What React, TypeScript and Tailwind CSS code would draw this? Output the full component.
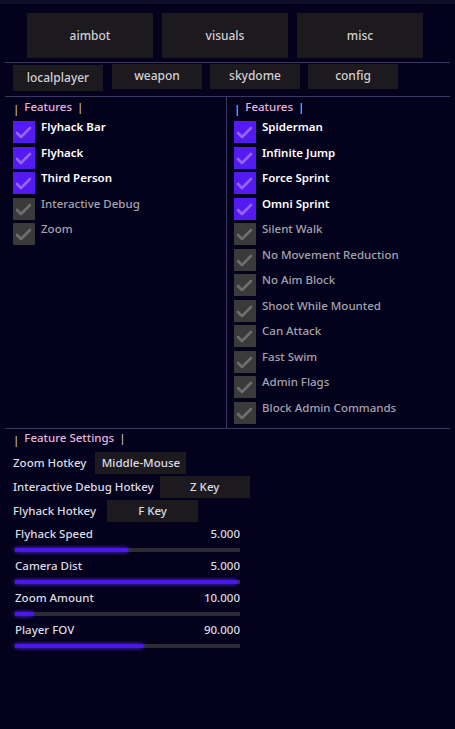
import React from "react";

const FONT = "font-['Noto_Sans','Open_Sans',sans-serif]";

function Check({ on }: { on: boolean }) {
  return (
    <div
      className={`w-[22px] h-[22px] shrink-0 flex items-center justify-center ${
        on ? "bg-[#5519f2]" : "bg-[#3a3a3b]"
      }`}
    >
      <svg width="22" height="22" viewBox="0 0 22 22">
        <path
          d="M4 12 L8 16 L17 7"
          fill="none"
          stroke={on ? "#9566ec" : "#6e6e6a"}
          strokeWidth="2.6"
          strokeLinecap="round"
          strokeLinejoin="round"
        />
      </svg>
    </div>
  );
}

function Item({ label, on }: { label: string; on: boolean }) {
  return (
    <div className="flex items-start h-[22px]">
      <Check on={on} />
      <span
        className={`ml-[6px] text-[11.5px] leading-[14px] mt-[-1px] whitespace-nowrap ${
          on ? "text-white font-semibold" : "text-[#a3a3ad] font-medium"
        }`}
      >
        {label}
      </span>
    </div>
  );
}

function Header({ title }: { title: string }) {
  return (
    <div className="flex items-center h-[16px] text-[11.5px] leading-[16px]">
      <span className="text-[#dadae0] translate-y-[2px]">|</span>
      <span className="ml-[5px] text-[#e6b3df] font-medium">{title}</span>
      <span className="ml-[5px] text-[#dadae0]">|</span>
    </div>
  );
}

function Slider({ label, value, pct }: { label: string; value: string; pct: number }) {
  return (
    <div className="ml-[15px] w-[225px] mt-[6px] first:mt-0">
      <div className="flex justify-between h-[16px] text-[11.5px] leading-[16px] text-[#dcdce2] font-medium">
        <span>{label}</span>
        <span>{value}</span>
      </div>
      <div className="mt-[6px] h-[4px] bg-[#2d2d31] relative">
        <div
          className="h-full bg-[#4a16f4] shadow-[0_0_4px_#5b2cff]"
          style={{ width: `${pct}%` }}
        />
      </div>
    </div>
  );
}

export default function App() {
  const left: [string, boolean][] = [
    ["Flyhack Bar", true],
    ["Flyhack", true],
    ["Third Person", true],
    ["Interactive Debug", false],
    ["Zoom", false],
  ];
  const right: [string, boolean][] = [
    ["Spiderman", true],
    ["Infinite Jump", true],
    ["Force Sprint", true],
    ["Omni Sprint", true],
    ["Silent Walk", false],
    ["No Movement Reduction", false],
    ["No Aim Block", false],
    ["Shoot While Mounted", false],
    ["Can Attack", false],
    ["Fast Swim", false],
    ["Admin Flags", false],
    ["Block Admin Commands", false],
  ];
  return (
    <div className={`w-[455px] h-[729px] bg-[#04011c] border-t-4 border-[#110e27] overflow-hidden ${FONT}`}>
      <div className="flex gap-[9px] pl-[27px] pt-[9px]">
        {["aimbot", "visuals", "misc"].map((t) => (
          <div
            key={t}
            className="w-[126px] h-[45px] bg-[#1c1a1f] flex items-center justify-center text-[12px] text-[#d0d0d4] font-medium"
          >
            {t}
          </div>
        ))}
      </div>
      <div className="mx-[5px] mt-[4px] h-px bg-[#3a3763]" />
      <div className="flex items-start pl-[13px] mt-px h-[27px]">
        <div className="w-[90px] h-[26px] mt-px bg-[#1c1a1f] flex items-center justify-center text-[12px] text-[#d0d0d4] font-medium">
          localplayer
        </div>
        <div className="w-[90px] h-[25px] ml-[9px] bg-[#1c1a1f] flex items-center justify-center text-[12px] text-[#d0d0d4] font-medium pb-[1px]">
          weapon
        </div>
        <div className="w-[90px] h-[25px] ml-[8px] bg-[#1c1a1f] flex items-center justify-center text-[12px] text-[#d0d0d4] font-medium pb-[1px]">
          skydome
        </div>
        <div className="w-[90px] h-[25px] ml-[8px] bg-[#1c1a1f] flex items-center justify-center text-[12px] text-[#d0d0d4] font-medium pb-[1px]">
          config
        </div>
      </div>
      <div className="mx-[5px] mt-[5px] h-px bg-[#3a3763]" />
      <div className="mx-[5px] flex h-[332px] border-b border-[#3a3763]">
        <div className="w-[222px] border-r border-[#3a3763] pl-[8px] pt-[2px]">
          <Header title="Features" />
          <div className="mt-[6px] flex flex-col gap-[3.5px]">
            {left.map(([l, on]) => (
              <Item key={l} label={l} on={on} />
            ))}
          </div>
        </div>
        <div className="flex-1 pl-[7px] pt-[2px]">
          <Header title="Features" />
          <div className="mt-[6px] flex flex-col gap-[3.5px]">
            {right.map(([l, on]) => (
              <Item key={l} label={l} on={on} />
            ))}
          </div>
        </div>
      </div>
      <div className="pl-[13px] mt-px">
        <Header title="Feature Settings" />
      </div>
      <div className="pl-[13px] mt-[6px] flex flex-col gap-[2px] text-[11.5px] font-medium text-[#dcdce2]">
        <div className="flex items-center h-[22px] gap-[9px]">
          <span className="whitespace-nowrap">Zoom Hotkey</span>
          <div className="w-[91px] h-[22px] bg-[#1c1a1f] flex items-center justify-center">Middle-Mouse</div>
        </div>
        <div className="flex items-center h-[22px] gap-[6px]">
          <span className="whitespace-nowrap">Interactive Debug Hotkey</span>
          <div className="w-[90px] h-[22px] bg-[#1c1a1f] flex items-center justify-center">Z Key</div>
        </div>
        <div className="flex items-center h-[22px] gap-[11px]">
          <span className="whitespace-nowrap">Flyhack Hotkey</span>
          <div className="w-[91px] h-[22px] bg-[#1c1a1f] flex items-center justify-center">F Key</div>
        </div>
      </div>
      <div className="mt-[4px] flex flex-col">
        <Slider label="Flyhack Speed" value="5.000" pct={50} />
        <Slider label="Camera Dist" value="5.000" pct={98.7} />
        <Slider label="Zoom Amount" value="10.000" pct={8} />
        <Slider label="Player FOV" value="90.000" pct={57} />
      </div>
    </div>
  );
}
